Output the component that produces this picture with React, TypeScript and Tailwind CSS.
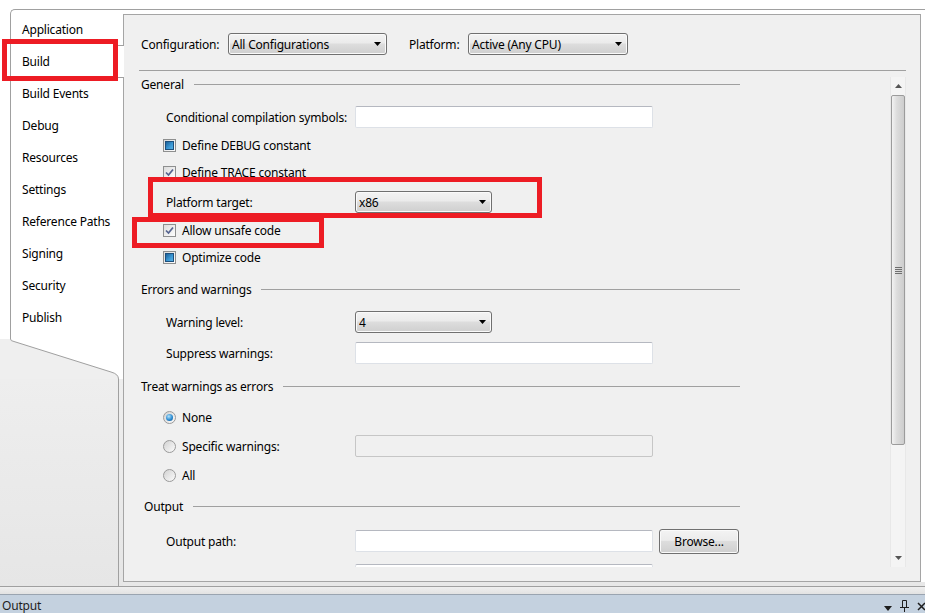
import React from "react";

const tabs = [
  "Application",
  "Build",
  "Build Events",
  "Debug",
  "Resources",
  "Settings",
  "Reference Paths",
  "Signing",
  "Security",
  "Publish",
];

function Arrow({ color = "#000" }: { color?: string }) {
  return (
    <svg width="7" height="4" viewBox="0 0 7 4" className="block">
      <path d="M0 0H7L3.5 4Z" fill={color} />
    </svg>
  );
}

function Combo({ value, className }: { value: string; className: string }) {
  return (
    <div
      className={`${className} h-[22px] shrink-0 flex items-center rounded-[3px] border border-[#707070] bg-[linear-gradient(#f3f3f3,#ebebeb_45%,#dddddd_50%,#cfcfcf)] pl-[3px] pr-[5px] shadow-[inset_0_0_0_1px_#fafafa]`}
    >
      <span className="flex-1 truncate">{value}</span>
      <Arrow />
    </div>
  );
}

function TextBox({ disabled = false }: { disabled?: boolean }) {
  return disabled ? (
    <div className="w-[298px] h-[22px] shrink-0 rounded-[2px] border border-[#c6c6c6] bg-[#f0f0f0]" />
  ) : (
    <div className="w-[298px] h-[22px] shrink-0 rounded-[2px] border border-[#dde1e7] border-t-[#b5b8c0] bg-white" />
  );
}

function Check({ state }: { state: "ind" | "on" }) {
  return (
    <div className="w-[13px] h-[13px] shrink-0 border border-[#8e8f8f] bg-[linear-gradient(135deg,#dcdcdc,#fdfdfd)] flex items-center justify-center">
      {state === "ind" ? (
        <div className="w-[9px] h-[9px] border border-[#1d4f7c] bg-[linear-gradient(135deg,#1a6099,#3d9ad6_60%,#56b0e4)]" />
      ) : (
        <svg width="11" height="11" viewBox="0 0 11 11" className="block">
          <path d="M2 5.5L4.5 8L9 2.5" fill="none" stroke="#55638f" strokeWidth="1.7" />
        </svg>
      )}
    </div>
  );
}

function Radio({ on = false }: { on?: boolean }) {
  return (
    <div className="w-[13px] h-[13px] shrink-0 rounded-full border border-[#9a9a9a] bg-[linear-gradient(135deg,#d2d2d2,#fbfbfb)] flex items-center justify-center">
      {on && (
        <div className="w-[7px] h-[7px] rounded-full bg-[radial-gradient(circle_at_40%_35%,#b5e3fa,#2c8cd2_55%,#0e4c84)]" />
      )}
    </div>
  );
}

function Section({ title, className }: { title: string; className: string }) {
  return (
    <div className={`${className} h-[22px] w-[599px] flex items-center`}>
      <span>{title}</span>
      <div className="ml-[10px] flex-1 h-px bg-[#a0a0a0]" />
    </div>
  );
}

function Field({
  label,
  className,
  children,
}: {
  label: string;
  className: string;
  children: React.ReactNode;
}) {
  return (
    <div className={`${className} h-[22px] flex items-center pl-[25px]`}>
      <span className="w-[189px] shrink-0">{label}</span>
      {children}
    </div>
  );
}

function CheckRow({ label, state, className }: { label: string; state: "ind" | "on"; className: string }) {
  return (
    <div className={`${className} h-[22px] flex items-center pl-[22px] gap-[6px]`}>
      <Check state={state} />
      <span>{label}</span>
    </div>
  );
}

export default function App() {
  return (
    <div className="relative w-[925px] h-[613px] overflow-hidden bg-white text-[12px] leading-[16px] tracking-[-0.2px] text-black font-['Noto_Sans','Segoe_UI',sans-serif] [&_span]:translate-y-px">
      <div className="h-[9px]" />
      <div className="flex h-[577px]">
        {/* tab strip */}
        <div className="w-[123px] flex flex-col">
          <div className="ml-[10px] h-[330px] border-l border-t border-[#a0a0a0] rounded-tl-[5px] bg-white pt-[3px]">
            {tabs.map((t) => (
              <div key={t} className="relative h-[32px] flex items-center pl-[11px]">
                <span>{t}</span>
                {t === "Build" && (
                  <div className="absolute left-[106px] top-0 w-[7px] h-[33px] border-y border-[#a0a0a0] bg-white z-10" />
                )}
              </div>
            ))}
          </div>
          <svg width="123" height="40" viewBox="0 0 123 40" className="block">
            <rect width="123" height="40" fill="#efefef" />
            <path d="M10.5 0Q10.5 2 14 2.5L111 33Q118.5 35 118.5 40L123 40L123 0Z" fill="#fff" />
            <path d="M10.5 0Q10.5 2 14 2.5L111 33Q118.5 35 118.5 40" fill="none" stroke="#a0a0a0" />
          </svg>
          <div className="flex-1 bg-[linear-gradient(#eeeeee,#e6e6e6)]">
            <div className="w-[119px] h-full border-r border-[#a0a0a0]" />
          </div>
        </div>

        {/* property page */}
        <div className="flex-1 flex flex-col border-t border-[#a0a0a0] bg-white pt-[4px]">
          <div className="w-[798px] h-[568px] shrink-0 border border-[#a5a5a5] bg-[#f0f0f0] flex flex-col">
            <div className="pt-[18px] pl-[17px] flex items-center">
              <span className="w-[87px]">Configuration:</span>
              <Combo value="All Configurations" className="w-[159px]" />
              <span className="ml-[22px] w-[59px]">Platform:</span>
              <Combo value="Active (Any CPU)" className="w-[160px]" />
            </div>
            <div className="mt-[15px] ml-[15px] mr-[14px] h-px bg-[#a0a0a0]" />

            <div className="h-[496px] shrink-0 flex overflow-hidden">
              <div className="flex-1 pl-[17px] pt-[2px]">
                <Section title="General" className="" />
                <Field label="Conditional compilation symbols:" className="mt-[11px]">
                  <TextBox />
                </Field>
                <CheckRow label="Define DEBUG constant" state="ind" className="mt-[6px]" />
                <CheckRow label="Define TRACE constant" state="on" className="mt-[5px]" />
                <Field label="Platform target:" className="mt-[8px]">
                  <Combo value="x86" className="w-[137px]" />
                </Field>
                <CheckRow label="Allow unsafe code" state="on" className="mt-[6px]" />
                <CheckRow label="Optimize code" state="ind" className="mt-[5px]" />

                <Section title="Errors and warnings" className="mt-[10px]" />
                <Field label="Warning level:" className="mt-[11px]">
                  <Combo value="4" className="w-[137px]" />
                </Field>
                <Field label="Suppress warnings:" className="mt-[9px]">
                  <TextBox />
                </Field>

                <Section title="Treat warnings as errors" className="mt-[11px]" />
                <div className="mt-[9px] h-[22px] flex items-center pl-[22px] gap-[6px]">
                  <Radio on />
                  <span>None</span>
                </div>
                <div className="mt-[7px] h-[22px] flex items-center pl-[22px] gap-[6px]">
                  <Radio />
                  <span className="w-[167px]">Specific warnings:</span>
                  <TextBox disabled />
                </div>
                <div className="mt-[7px] h-[22px] flex items-center pl-[22px] gap-[6px]">
                  <Radio />
                  <span>All</span>
                </div>

                <div className="mt-[9px] h-[22px] w-[599px] flex items-center pl-[3px]">
                  <span>Output</span>
                  <div className="ml-[10px] flex-1 h-px bg-[#a0a0a0]" />
                </div>
                <Field label="Output path:" className="mt-[13px]">
                  <TextBox />
                  <div className="ml-[6px] w-[80px] h-[25px] shrink-0 rounded-[3px] border border-[#707070] bg-[linear-gradient(#f3f3f3,#ebebeb_45%,#dddddd_50%,#cfcfcf)] shadow-[inset_0_0_0_1px_#fafafa] flex items-center justify-center">
                    <span>Browse...</span>
                  </div>
                </Field>
                <div className="mt-[12px] pl-[214px]">
                  <TextBox />
                </div>
              </div>

              {/* scrollbar */}
              <div className="mt-[6px] mr-[14px] w-[16px] h-[490px] shrink-0 flex flex-col bg-[#f4f4f4] border-x border-[#e8e8e8]">
                <div className="h-[18px] flex items-center justify-center">
                  <svg width="7" height="4" viewBox="0 0 7 4" className="block">
                    <path d="M0 4H7L3.5 0Z" fill="#555" />
                  </svg>
                </div>
                <div className="h-[350px] rounded-[2px] border border-[#9b9b9b] bg-[linear-gradient(90deg,#f2f2f2,#dcdcdc_40%,#cdcdcd)] flex flex-col items-center justify-center gap-[1px]">
                  <div className="w-[7px] h-px bg-[#6e6e6e]" />
                  <div className="w-[7px] h-px bg-[#6e6e6e]" />
                  <div className="w-[7px] h-px bg-[#6e6e6e]" />
                  <div className="w-[7px] h-px bg-[#6e6e6e]" />
                </div>
                <div className="flex-1" />
                <div className="h-[18px] flex items-center justify-center">
                  <Arrow color="#555" />
                </div>
              </div>
            </div>
          </div>
          <div className="flex-1 bg-[#e8e8e8]" />
        </div>
      </div>

      {/* bottom tool window bar */}
      <div className="h-px bg-[#a0a0a0]" />
      <div className="h-[7px] bg-[linear-gradient(#efefef,#e2e2e2)]" />
      <div className="h-px bg-[#9aa4b0]" />
      <div className="h-[18px] bg-[#c4d1df] flex pl-[2px] pt-[2px] text-[#1e1e1e]">
        <span className="flex-1">Output</span>
        <div className="flex items-start gap-[8px] pt-[3px]">
          <svg width="8" height="6" viewBox="0 0 8 6" className="mt-[6px] block">
            <path d="M0 0H8L4 5Z" fill="#1e1e1e" />
          </svg>
          <svg width="9" height="12" viewBox="0 0 9 12" className="block">
            <path d="M2.5 0.5V7.5M6.5 0.5V7.5M2.5 0.5H6.5M0 7.5H9M4.5 7.5V12" fill="none" stroke="#1e1e1e" />
          </svg>
          <svg width="8" height="12" viewBox="0 0 8 12" className="block">
            <path d="M1 3L8 10M8 3L1 10" fill="none" stroke="#1e1e1e" strokeWidth="1.5" />
          </svg>
        </div>
      </div>

      {/* red annotation boxes */}
      <div className="absolute left-[2px] top-[39px] w-[116px] h-[42px] border-[5px] border-[#ed1c24] z-20" />
      <div className="absolute left-[148px] top-[177px] w-[394px] h-[41px] border-[5px] border-[#ed1c24] z-20" />
      <div className="absolute left-[132px] top-[217px] w-[192px] h-[31px] border-[5px] border-[#ed1c24] z-20" />
    </div>
  );
}
